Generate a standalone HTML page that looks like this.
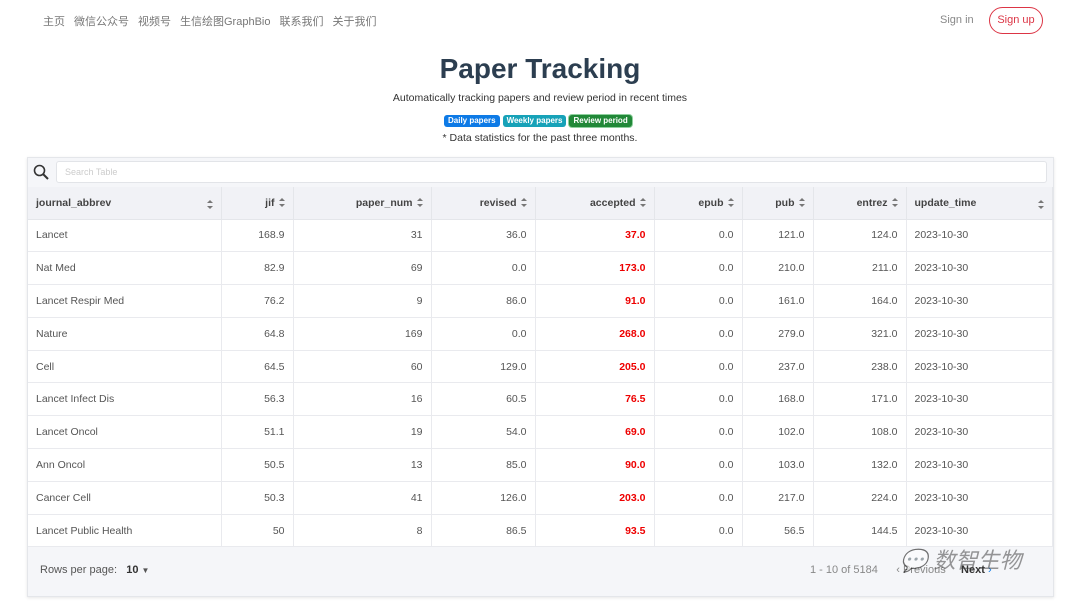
<!DOCTYPE html>
<html><head><meta charset="utf-8"><style>
*{box-sizing:border-box;margin:0;padding:0}
body{width:1080px;height:607px;background:#fff;font-family:"Liberation Sans","Noto Sans CJK SC",sans-serif;color:#333;position:relative;overflow:hidden}
.nav{position:absolute;top:13px;left:43px;font-size:11px;color:#777}
.nav span{margin-right:9px}
.signin{position:absolute;left:940px;top:14px;font-size:11px;color:#888}
.signup{position:absolute;left:989px;top:7px;width:54px;height:27px;border:1px solid #dc3545;border-radius:14px;color:#dc3545;font-size:11px;text-align:center;line-height:25px}
h1{position:absolute;top:53px;left:0;width:1080px;text-align:center;font-size:28px;color:#2c3e50;font-weight:bold}
.sub{position:absolute;top:92px;width:1080px;text-align:center;font-size:10.5px;color:#333}
.badges{position:absolute;top:115px;left:444px;font-size:8px;font-weight:bold;color:#fff}
.badges span{display:inline-block;height:12px;line-height:12px;padding:0 4px;border-radius:3px;margin-right:3px}
.note{position:absolute;top:132px;width:1080px;text-align:center;font-size:10.5px;color:#333}
.tbl{position:absolute;left:27px;top:157px;width:1027px;height:440px;border:1px solid #e4e6ea;box-shadow:0 1px 3px rgba(0,0,0,.1);background:#f5f6f9}
.search{position:absolute;left:28px;top:3px;width:991px;height:22px;background:#fff;border:1px solid #e2e4e8;border-radius:3px;font-size:9px;color:#ccc;padding:5px 8px}
table{position:absolute;top:29px;left:0;width:1025px;border-collapse:collapse;font-size:10.5px}
th{height:32px;background:#f1f2f6;font-weight:bold;color:#444;border-right:1px solid #e4e6ea;border-bottom:1px solid #e4e6ea;text-align:right;padding:0 8px}
td{height:32.8px;background:#fff;color:#555;border-right:1px solid #e9eaee;border-bottom:1px solid #e9eaee;text-align:right;padding:0 8px}
th:first-child,td:first-child,th:last-child,td:last-child{text-align:left}
td.r{color:#e00;font-weight:bold}
.ar{display:inline-block;vertical-align:middle;margin-left:4px;width:6px;height:9px;position:relative}
.ar:before{content:"";position:absolute;left:0;top:0;border-left:3px solid transparent;border-right:3px solid transparent;border-bottom:3.5px solid #777}
.ar:after{content:"";position:absolute;left:0;bottom:0;border-left:3px solid transparent;border-right:3px solid transparent;border-top:3.5px solid #777}
.fr{float:right;margin-top:3px}
.foot{position:absolute;top:406px;left:12px;font-size:11px;color:#555}
.pg{position:absolute;top:406px;left:782px;font-size:11px;color:#888}
.wm{position:absolute;left:900px;top:543px;font-size:22px;color:#444;opacity:.55;font-style:italic}
</style></head><body>
<div class="nav"><span>主页</span><span>微信公众号</span><span>视频号</span><span>生信绘图GraphBio</span><span>联系我们</span><span>关于我们</span></div>
<div class="signin">Sign in</div><div class="signup">Sign up</div>
<h1>Paper Tracking</h1>
<div class="sub">Automatically tracking papers and review period in recent times</div>
<div class="badges"><span style="background:#0d7ae6">Daily papers</span><span style="background:#17a2b8">Weekly papers</span><span style="background:#218838;box-shadow:0 0 0 1px #8fd19e">Review period</span></div>
<div class="note">* Data statistics for the past three months.</div>
<div class="tbl">
<svg style="position:absolute;left:5px;top:6px" width="16" height="16" viewBox="0 0 16 16"><circle cx="6.5" cy="6.5" r="5" fill="none" stroke="#333" stroke-width="1.6"/><path d="M10 10l5 5" stroke="#333" stroke-width="2"/></svg>
<div class="search">Search Table</div>
<table>
<tr><th style="width:193px">journal_abbrev<span class="ar fr"></span></th><th style="width:72px">jif<span class="ar"></span></th><th style="width:138px">paper_num<span class="ar"></span></th><th style="width:104px">revised<span class="ar"></span></th><th style="width:119px">accepted<span class="ar"></span></th><th style="width:88px">epub<span class="ar"></span></th><th style="width:71px">pub<span class="ar"></span></th><th style="width:93px">entrez<span class="ar"></span></th><th>update_time<span class="ar fr"></span></th></tr>
<tr><td>Lancet</td><td>168.9</td><td>31</td><td>36.0</td><td class="r">37.0</td><td>0.0</td><td>121.0</td><td>124.0</td><td>2023-10-30</td></tr>
<tr><td>Nat Med</td><td>82.9</td><td>69</td><td>0.0</td><td class="r">173.0</td><td>0.0</td><td>210.0</td><td>211.0</td><td>2023-10-30</td></tr>
<tr><td>Lancet Respir Med</td><td>76.2</td><td>9</td><td>86.0</td><td class="r">91.0</td><td>0.0</td><td>161.0</td><td>164.0</td><td>2023-10-30</td></tr>
<tr><td>Nature</td><td>64.8</td><td>169</td><td>0.0</td><td class="r">268.0</td><td>0.0</td><td>279.0</td><td>321.0</td><td>2023-10-30</td></tr>
<tr><td>Cell</td><td>64.5</td><td>60</td><td>129.0</td><td class="r">205.0</td><td>0.0</td><td>237.0</td><td>238.0</td><td>2023-10-30</td></tr>
<tr><td>Lancet Infect Dis</td><td>56.3</td><td>16</td><td>60.5</td><td class="r">76.5</td><td>0.0</td><td>168.0</td><td>171.0</td><td>2023-10-30</td></tr>
<tr><td>Lancet Oncol</td><td>51.1</td><td>19</td><td>54.0</td><td class="r">69.0</td><td>0.0</td><td>102.0</td><td>108.0</td><td>2023-10-30</td></tr>
<tr><td>Ann Oncol</td><td>50.5</td><td>13</td><td>85.0</td><td class="r">90.0</td><td>0.0</td><td>103.0</td><td>132.0</td><td>2023-10-30</td></tr>
<tr><td>Cancer Cell</td><td>50.3</td><td>41</td><td>126.0</td><td class="r">203.0</td><td>0.0</td><td>217.0</td><td>224.0</td><td>2023-10-30</td></tr>
<tr><td>Lancet Public Health</td><td>50</td><td>8</td><td>86.5</td><td class="r">93.5</td><td>0.0</td><td>56.5</td><td>144.5</td><td>2023-10-30</td></tr>
</table>
<div class="foot">Rows per page: &nbsp;&nbsp;<b style="color:#333">10</b> <span style="font-size:8px">▼</span></div>
<div class="pg">1 - 10 of 5184 &nbsp;&nbsp;&nbsp;&nbsp; ‹ Previous &nbsp;&nbsp;&nbsp; <b style="color:#333">Next</b> <span style="color:#0d7ae6">›</span></div>
</div>
<div class="wm">💬 数智生物</div>
</body></html>
